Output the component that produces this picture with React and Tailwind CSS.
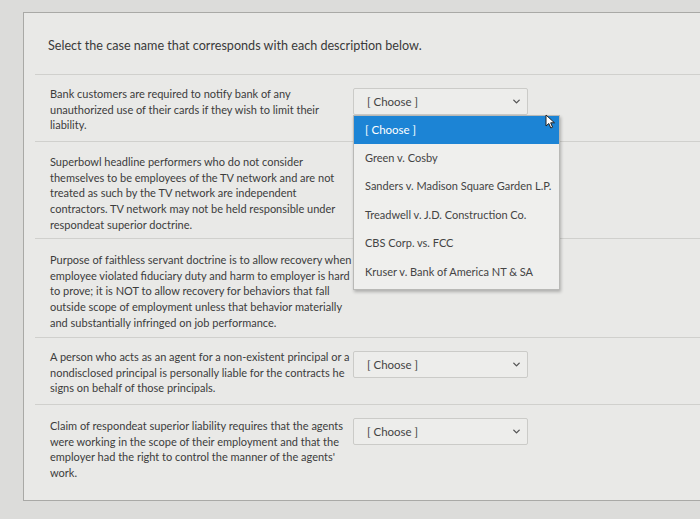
import { ChevronDown } from 'lucide-react';

const ROWS = [
  {
    text: 'Bank customers are required to notify bank of any unauthorized use of their cards if they wish to limit their liability.',
    h: 'h-[67px]', pt: 'pt-[11px]', open: true,
  },
  {
    text: 'Superbowl headline performers who do not consider themselves to be employees of the TV network and are not treated as such by the TV network are independent contractors. TV network may not be held responsible under respondeat superior doctrine.',
    h: 'h-[97px]', pt: 'pt-[12px]',
  },
  {
    text: 'Purpose of faithless servant doctrine is to allow recovery when employee violated fiduciary duty and harm to employer is hard to prove; it is NOT to allow recovery for behaviors that fall outside scope of employment unless that behavior materially and substantially infringed on job performance.',
    h: 'h-[99px]', pt: 'pt-[13px]',
  },
  {
    text: 'A person who acts as an agent for a non-existent principal or a nondisclosed principal is personally liable for the contracts he signs on behalf of those principals.',
    h: 'h-[67px]', pt: 'pt-[11px]', select: true,
  },
  {
    text: "Claim of respondeat superior liability requires that the agents were working in the scope of their employment and that the employer had the right to control the manner of the agents' work.",
    h: 'h-[97px]', pt: 'pt-[13px]', select: true,
  },
];

const OPTIONS = [
  'Green v. Cosby',
  'Sanders v. Madison Square Garden L.P.',
  'Treadwell v. J.D. Construction Co.',
  'CBS Corp. vs. FCC',
  'Kruser v. Bank of America NT & SA',
];

function Select() {
  return (
    <div className="w-[175px] h-[27px] border border-[#cbcbc8] rounded-[2px] bg-[#ededeb] flex items-center justify-between pl-[13px] pr-[5px] text-[11.5px] text-[#444]">
      <span>[ Choose ]</span>
      <ChevronDown size={11} strokeWidth={3} className="text-[#555]" />
    </div>
  );
}

function Dropdown() {
  return (
    <div className="absolute left-0 top-[27px] w-[207px] bg-[#efefed] border border-[#b9b9b6] shadow-[1px_2px_3px_rgba(0,0,0,0.25)] z-10">
      <div className="h-[28px] bg-[#1c84d5] text-white flex items-center pl-[11px] text-[11.5px]">[ Choose ]</div>
      {OPTIONS.map(o => (
        <div key={o} className="h-[28.4px] flex items-center pl-[11px] text-[11px] text-[#444] whitespace-nowrap">{o}</div>
      ))}
      <div className="h-[3px]" />
      <svg className="absolute right-[3px] top-[-2px]" width="11" height="15" viewBox="0 0 11 15">
        <path d="M1 1 L1 12 L3.8 9.5 L5.8 14 L7.6 13.2 L5.7 8.8 L9.5 8.8 Z" fill="#fff" stroke="#222" strokeWidth="1" strokeLinejoin="round" />
      </svg>
    </div>
  );
}

export default function App() {
  return (
    <div className="w-[700px] h-[519px] overflow-hidden bg-[#dcdcda] pt-[12px] pl-[23px]" style={{ fontFamily: 'Lato, "Noto Sans", sans-serif' }}>
      <div className="h-[489px] bg-[#e9e9e7] border-l border-t border-b border-[#a9a9a6]">
        <div className="pl-[24px] pt-[24px] h-[61px] text-[12.6px] text-[#3a3a3a]">
          Select the case name that corresponds with each description below.
        </div>
        <div className="ml-[11px]">
          {ROWS.map((r, i) => (
            <div key={i} className={`${r.h} border-t border-[#d0d0cd] pl-[15px] flex`}>
              <div className={`${r.pt} w-[303px] text-[11px] leading-[15.7px] text-[#3c3c3c]`}>{r.text}</div>
              <div className="pt-[13px]">
                {(r.select || r.open) && (
                  <div className="relative">
                    <Select />
                    {r.open && <Dropdown />}
                  </div>
                )}
              </div>
            </div>
          ))}
        </div>
      </div>
    </div>
  );
}
